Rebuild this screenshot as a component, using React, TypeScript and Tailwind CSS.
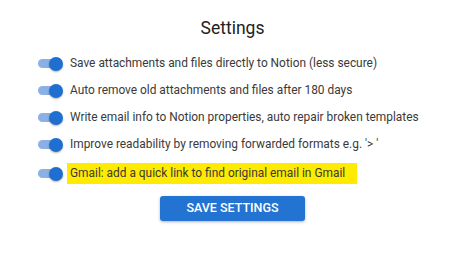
import React from "react";

const items = [
  { label: "Save attachments and files directly to Notion (less secure)", hl: false },
  { label: "Auto remove old attachments and files after 180 days", hl: false },
  { label: "Write email info to Notion properties, auto repair broken templates", hl: false },
  { label: "Improve readability by removing forwarded formats e.g. '> '", hl: false },
  { label: "Gmail: add a quick link to find original email in Gmail", hl: true },
];

function Toggle() {
  return (
    <div className="relative w-[26px] h-[14px] shrink-0 flex items-center">
      <div className="w-[24px] h-[9px] rounded-full bg-[#8ab0e6] ml-[1px]" />
      <div className="absolute right-0 top-0 w-[14px] h-[14px] rounded-full bg-[#1f6fd1] shadow-[0_1px_2px_rgba(0,0,0,0.3)]" />
    </div>
  );
}

export default function App() {
  return (
    <div className="w-[465px] h-[257px] bg-white flex flex-col items-center" style={{ fontFamily: "Roboto, 'Liberation Sans', sans-serif" }}>
      <h1 className="mt-[16px] text-[17.5px] leading-[24px] text-[#222]">Settings</h1>
      <div className="self-start ml-[37px] mt-[13px] flex flex-col gap-[6px]">
        {items.map((it, i) => (
          <div key={i} className={`flex items-center gap-[4px] h-[21px] ${it.hl ? "mt-[2px]" : ""}`}>
            <Toggle />
            <span className={`px-[3px] text-[11.9px] leading-[21px] text-[#3a3a3a] ${it.hl ? "bg-[#ffeb00] pr-[12px]" : ""}`}>
              {it.label}
            </span>
          </div>
        ))}
      </div>
      <button className="mt-[12px] w-[145px] h-[25px] rounded-[3px] bg-[#2273d2] text-white text-[12.5px] font-medium shadow-[0_1px_3px_rgba(0,0,0,0.3)]">
        SAVE SETTINGS
      </button>
    </div>
  );
}
